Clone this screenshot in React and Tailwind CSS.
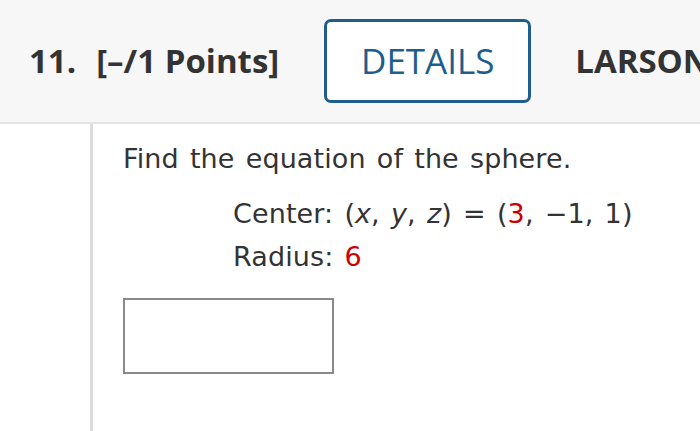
export default function App() {
  return (
    <div className="w-[700px] h-[431px] overflow-hidden bg-white">
      {/* Question header */}
      <div className="h-[124px] bg-[#f7f7f7] border-b-2 border-[#e3e3e3] flex items-center whitespace-nowrap font-['Open_Sans',sans-serif] text-[#333]">
        <span className="ml-[29px] text-[33px] font-bold">11.</span>
        <span className="ml-[20px] text-[33px] font-bold">[–/1 Points]</span>
        <div className="ml-[45px] shrink-0 w-[207px] h-[84px] border-[3px] border-[#1d5e8c] rounded-[7px] flex items-center justify-center text-[#1d5e8c] text-[35px] bg-white">
          DETAILS
        </div>
        <span className="ml-[44px] text-[33px] font-bold">LARSON</span>
      </div>

      {/* Question body */}
      <div className="flex h-[307px]">
        <div className="ml-[90px] w-[3px] bg-[#dcdcdc]" />
        <div className="pl-[30px] pt-[18px] font-['DejaVu_Sans',sans-serif] text-[#333] text-[27px] tracking-[0.1px] [word-spacing:2.5px] whitespace-nowrap">
          <p className="leading-[34px]">Find the equation of the sphere.</p>
          <div className="ml-[110px] mt-[16px] leading-[43px]">
            <p>
              Center: (<i>x</i>, <i>y</i>, <i>z</i>) = (<span className="text-[#cc0000]">3</span>, −1, 1)
            </p>
            <p>
              Radius: <span className="text-[#cc0000]">6</span>
            </p>
          </div>
          <div className="mt-[20px] w-[211px] h-[76px] border-2 border-[#8a8a8a]" />
        </div>
      </div>
    </div>
  );
}
